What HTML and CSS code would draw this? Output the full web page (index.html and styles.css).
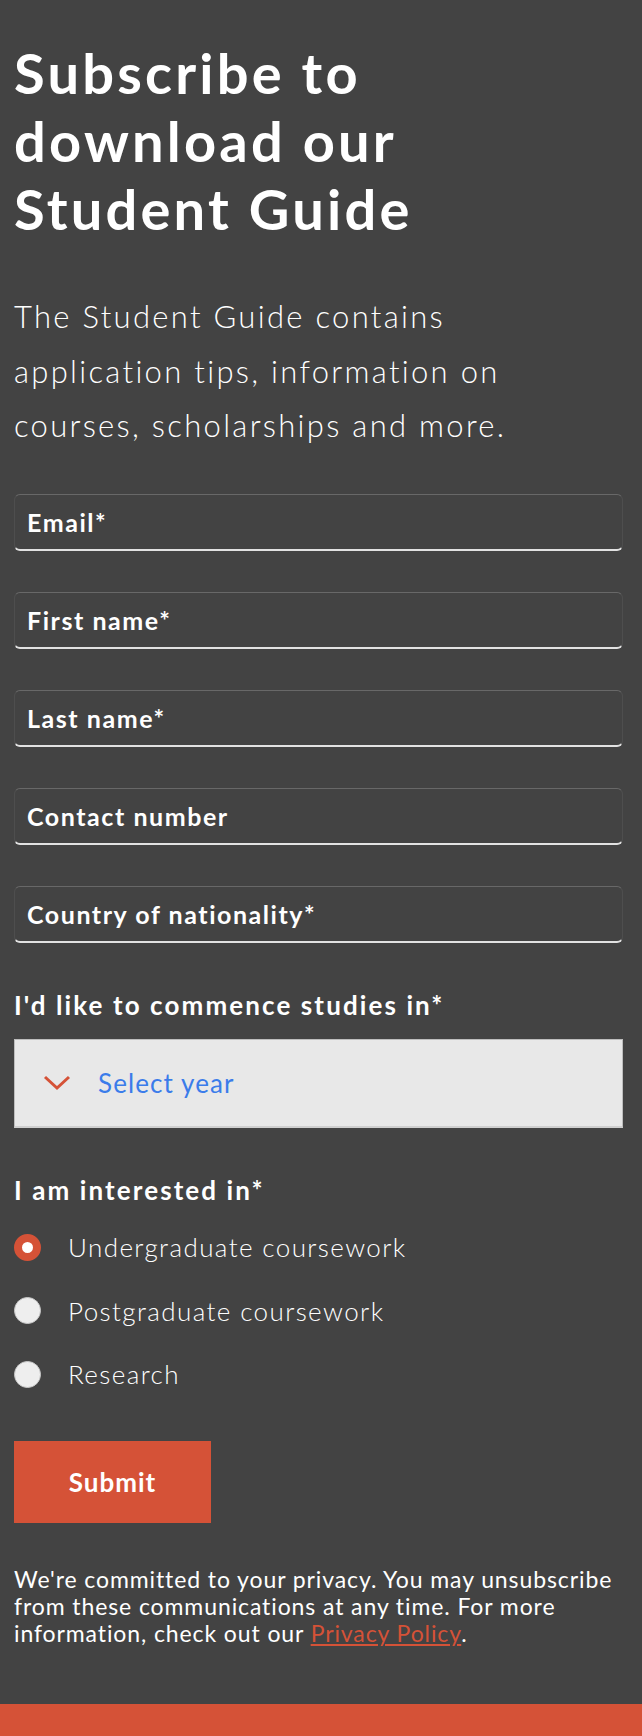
FILE: index.html
```html
<!DOCTYPE html>
<html lang="en">
<head>
    <meta charset="UTF-8">
    <meta name="viewport" content="width=device-width, initial-scale=1.0">
    <title>Subscribe to download our Student Guide</title>
    <link rel="stylesheet" href="styles.css">
</head>
<body>
    <div class="container">
        <h1>Subscribe to download our Student Guide</h1>
        <p class="intro">The Student Guide contains application tips, information on courses, scholarships and more.</p>

        <form class="guide-form" onsubmit="return false;">
            <input class="field" type="email" placeholder="Email*">
            <input class="field" type="text" placeholder="First name*">
            <input class="field" type="text" placeholder="Last name*">
            <input class="field" type="tel" placeholder="Contact number">
            <input class="field" type="text" placeholder="Country of nationality*">

            <label class="group-label" for="year">I'd like to commence studies in*</label>
            <div class="select-wrap">
                <svg class="chevron" width="28" height="16" viewBox="0 0 28 16">
                    <polyline points="2,2 14,13 26,2" fill="none" stroke="#d55237" stroke-width="3"/>
                </svg>
                <select id="year">
                    <option>Select year</option>
                    <option>2024</option>
                    <option>2025</option>
                </select>
            </div>

            <div class="group-label">I am interested in*</div>
            <div class="radios">
                <label class="radio"><input type="radio" name="interest" checked> Undergraduate coursework</label>
                <label class="radio"><input type="radio" name="interest"> Postgraduate coursework</label>
                <label class="radio"><input type="radio" name="interest"> Research</label>
            </div>

            <button type="submit">Submit</button>
        </form>

        <p class="privacy">We're committed to your privacy. You may unsubscribe from these communications at any time. For more information, check out our <a href="#">Privacy Policy</a>.</p>
    </div>
    <div class="footer-bar"></div>
</body>
</html>
```

FILE: styles.css
```css
body {
    margin: 0;
    background-color: #434343;
    color: #ffffff;
    font-family: Lato, "Open Sans", sans-serif;
}
.container {
    padding: 39px 19px 57px 14px;
}
h1 {
    margin: 0;
    font-size: 56px;
    line-height: 68px;
    font-weight: 700;
    letter-spacing: 3.2px;
    width: 440px;
}
.intro {
    margin: 46px 0 0;
    font-size: 31px;
    line-height: 54.5px;
    font-weight: 300;
    letter-spacing: 2.3px;
    width: 540px;
}
.guide-form {
    margin-top: 41px;
}
.field {
    display: block;
    width: 100%;
    height: 57px;
    box-sizing: border-box;
    margin: 0 0 41px;
    padding: 0 12px;
    background: transparent;
    border: 1px solid rgba(255, 255, 255, 0.06);
    border-top-color: rgba(255, 255, 255, 0.2);
    border-bottom: 2px solid #e2e2e2;
    border-radius: 6px;
    color: #ffffff;
    font-family: inherit;
    font-size: 25px;
    font-weight: 700;
    letter-spacing: 1.55px;
    outline: none;
}
.field::placeholder {
    color: #ffffff;
    opacity: 1;
}
.field:last-of-type {
    margin-bottom: 0;
}
.group-label {
    display: block;
    margin-top: 47px;
    font-size: 26px;
    line-height: 30px;
    font-weight: 700;
    letter-spacing: 2.1px;
}
.select-wrap {
    position: relative;
    margin-top: 19px;
}
.select-wrap select {
    display: block;
    width: 100%;
    height: 89px;
    box-sizing: border-box;
    padding: 0 0 0 83px;
    -webkit-appearance: none;
    appearance: none;
    background-color: #e8e8e8;
    border: 1px solid #bdbdbd;
    border-bottom: 2px solid #cfcfcf;
    border-radius: 0;
    color: #3b7cea;
    font-family: inherit;
    font-size: 26px;
    font-weight: 400;
    letter-spacing: 1.1px;
}
.chevron {
    position: absolute;
    left: 29px;
    top: 36px;
    pointer-events: none;
}
.radios {
    margin-top: 11px;
}
.radio {
    display: flex;
    align-items: center;
    height: 63.5px;
    gap: 27px;
    font-size: 26px;
    font-weight: 300;
    letter-spacing: 1.4px;
}
.radio input {
    -webkit-appearance: none;
    appearance: none;
    margin: 0;
    width: 27px;
    height: 27px;
    border-radius: 50%;
    background-color: #eeeeee;
    border: 1px solid #c8c8c8;
    box-sizing: border-box;
}
.radio input:checked {
    background-color: #ffffff;
    border: 8px solid #d55237;
}
button {
    display: block;
    margin-top: 35px;
    width: 197px;
    height: 82px;
    border: none;
    background-color: #d55237;
    color: #ffffff;
    font-family: inherit;
    font-size: 26px;
    font-weight: 700;
    letter-spacing: 1px;
}
.privacy {
    margin: 43px 0 0;
    font-size: 23px;
    line-height: 27px;
    font-weight: 400;
    letter-spacing: 0.9px;
}
.privacy a {
    color: #d55237;
}
.footer-bar {
    height: 33px;
    background-color: #d55237;
}
```
